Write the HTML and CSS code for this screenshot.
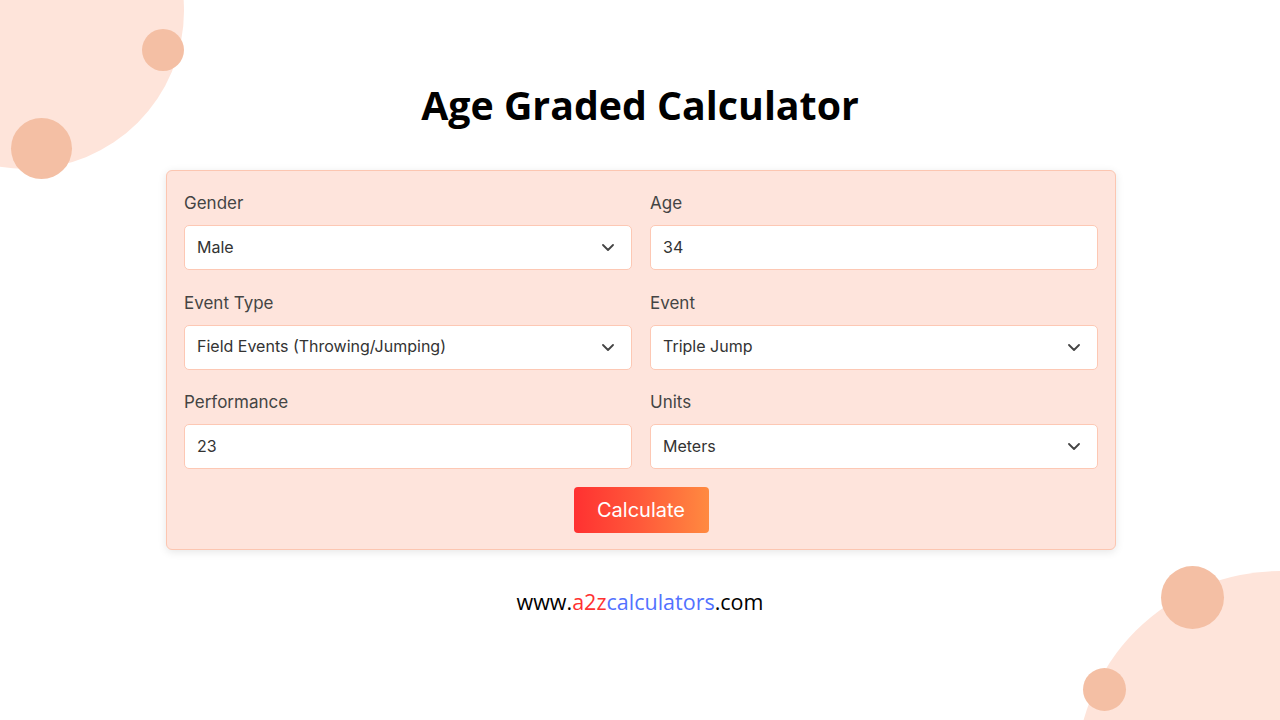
FILE: index.html
```html
<!DOCTYPE html>
<html lang="en">
<head>
<meta charset="utf-8">
<title>Age Graded Calculator</title>
<link rel="stylesheet" href="styles.css">
</head>
<body>
<div class="page">
  <div class="deco deco-tl-big"></div>
  <div class="deco deco-tl-a"></div>
  <div class="deco deco-tl-b"></div>
  <div class="deco deco-br-big"></div>
  <div class="deco deco-br-a"></div>
  <div class="deco deco-br-b"></div>

  <main class="content">
    <h1 class="title">Age Graded Calculator</h1>
    <form class="card">
      <div class="grid">
        <div class="field">
          <label class="label">Gender</label>
          <select class="control select"><option>Male</option><option>Female</option></select>
        </div>
        <div class="field">
          <label class="label">Age</label>
          <input class="control" type="text" value="34">
        </div>
        <div class="field">
          <label class="label">Event Type</label>
          <select class="control select"><option>Field Events (Throwing/Jumping)</option></select>
        </div>
        <div class="field">
          <label class="label">Event</label>
          <select class="control select"><option>Triple Jump</option></select>
        </div>
        <div class="field">
          <label class="label">Performance</label>
          <input class="control" type="text" value="23">
        </div>
        <div class="field">
          <label class="label">Units</label>
          <select class="control select"><option>Meters</option></select>
        </div>
      </div>
      <div class="actions">
        <button type="button" class="btn">Calculate</button>
      </div>
    </form>
    <p class="footer">www.<span class="red">a2z</span><span class="blue">calculators</span>.com</p>
  </main>
</div>
</body>
</html>
```
FILE: styles.css
```css
* { box-sizing: border-box; }
html, body { margin: 0; padding: 0; }
body {
  background: #ffffff;
  font-family: "Inter", "Liberation Sans", sans-serif;
}
.page {
  position: relative;
  width: 1280px;
  height: 720px;
  overflow: hidden;
}
.deco {
  position: absolute;
  border-radius: 50%;
}
.deco-tl-big {
  left: -132px; top: -147px;
  width: 316px; height: 316px;
  background: #fee4da;
}
.deco-tl-a {
  left: 142px; top: 29px;
  width: 42px; height: 42px;
  background: #f4bfa4;
}
.deco-tl-b {
  left: 11px; top: 118px;
  width: 61px; height: 61px;
  background: #f4bfa4;
}
.deco-br-big {
  left: 1076px; top: 571px;
  width: 408px; height: 408px;
  background: #fee4da;
}
.deco-br-a {
  left: 1161px; top: 566px;
  width: 63px; height: 63px;
  background: #f4bfa4;
}
.deco-br-b {
  left: 1083px; top: 668px;
  width: 43px; height: 43px;
  background: #f4bfa4;
}
.content {
  position: relative;
  padding-top: 81px;
  display: flex;
  flex-direction: column;
  align-items: center;
}
.title {
  margin: 0;
  font-family: "Open Sans", "Liberation Sans", sans-serif;
  font-weight: 700;
  font-size: 39.3px;
  line-height: 48px;
  color: #000;
}
.card {
  margin: 41px 0 0 2px;
  width: 950px;
  background: #fee4dc;
  border: 1px solid #fcc6b1;
  border-radius: 6px;
  box-shadow: 0 2px 8px rgba(0, 0, 0, 0.10);
  padding: 19px 17px 16px;
}
.grid {
  display: grid;
  grid-template-columns: 1fr 1fr;
  column-gap: 18px;
  row-gap: 19.5px;
}
.field {
  display: flex;
  flex-direction: column;
}
.label {
  font-size: 17px;
  line-height: 24px;
  color: #444;
  margin-top: 1px;
  margin-bottom: 10px;
}
.control {
  height: 45px;
  width: 100%;
  border: 1px solid #fdc8b4;
  border-radius: 5px;
  background: #fff;
  padding: 0 12px 2px;
  font-family: "Inter", "Liberation Sans", sans-serif;
  font-size: 16px;
  color: #333;
  outline: none;
  margin: 0;
}
.select {
  -webkit-appearance: none;
  appearance: none;
  background-image: url("data:image/svg+xml,%3Csvg xmlns='http://www.w3.org/2000/svg' width='12' height='7' viewBox='0 0 12 7'%3E%3Cpath d='M1 1l5 5 5-5' fill='none' stroke='%23444' stroke-width='1.8' stroke-linecap='round' stroke-linejoin='round'/%3E%3C/svg%3E");
  background-repeat: no-repeat;
  background-position: right 17px center;
  background-size: 12px 7px;
}
.actions {
  display: flex;
  justify-content: center;
  margin-top: 18px;
}
.btn {
  width: 135px;
  height: 46px;
  border: none;
  border-radius: 4px;
  background: linear-gradient(90deg, #ff3131 0%, #ff5a3a 50%, #ff8a40 100%);
  color: #fff;
  font-family: "Inter", "Liberation Sans", sans-serif;
  font-size: 20px;
  cursor: pointer;
}
.footer {
  margin: 38px 0 0;
  font-family: "Open Sans", "Liberation Sans", sans-serif;
  font-size: 21.5px;
  line-height: 28px;
  color: #000;
}
.red { color: #ff3131; }
.blue { color: #5271ff; }
```
